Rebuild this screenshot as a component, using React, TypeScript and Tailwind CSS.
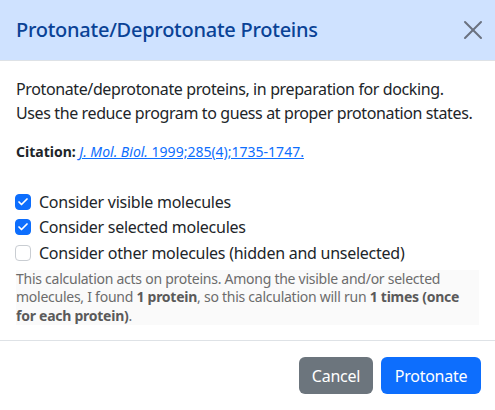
import { Check, X } from 'lucide-react'

const FONT = 'font-["Noto_Sans","Open_Sans",sans-serif] tracking-[-0.016em]'

const OPTIONS = [
  { label: 'Consider visible molecules', checked: true },
  { label: 'Consider selected molecules', checked: true },
  { label: 'Consider other molecules (hidden and unselected)', checked: false },
]

function CheckRow({ label, checked }: { label: string; checked: boolean }) {
  return (
    <div className="flex h-[25.5px] items-center gap-2">
      <span
        className={`ml-[-1px] flex h-4 w-4 shrink-0 items-center justify-center rounded-[4px] border ${
          checked ? 'border-[#0d6efd] bg-[#0d6efd]' : 'border-[#c9cdd2] bg-white'
        }`}
      >
        {checked && <Check className="h-3 w-3 text-white" strokeWidth={3.5} />}
      </span>
      <span className="text-[16px] leading-6 text-[#212529]">{label}</span>
    </div>
  )
}

export default function App() {
  return (
    <div className={`h-[410px] w-[495px] overflow-hidden bg-white ${FONT}`}>
      {/* header */}
      <div className="flex h-[61px] items-center justify-between border-b border-[#dee2e6] bg-[#cfe2ff] pl-4 pr-[6px]">
        <h5 className="text-[20px] font-medium leading-6 text-[#0a4296]">Protonate/Deprotonate Proteins</h5>
        <X className="h-8 w-8 text-[#6b7280]" strokeWidth={1.5} />
      </div>

      {/* body */}
      <div className="px-4 pb-[15px] pt-4">
        <p className="whitespace-nowrap text-[16px] leading-6 tracking-[-0.024em] text-[#212529]">
          Protonate/deprotonate proteins, in preparation for docking.
          <br />
          Uses the reduce program to guess at proper protonation states.
        </p>
        <p className="mt-4 text-[14px] leading-[21px] tracking-normal text-[#212529]">
          <b className="font-bold">Citation:</b>{' '}
          <a className="text-[#0d6efd] underline">
            <i>J. Mol. Biol.</i> 1999;285(4);1735-1747.
          </a>
        </p>

        <div className="mt-[27px]">
          {OPTIONS.map(o => (
            <CheckRow key={o.label} label={o.label} checked={o.checked} />
          ))}
        </div>

        <div className="mt-[4px] bg-[#fafafa] pr-3 text-[14px] leading-[18.5px] text-[#6c6c6c]">
          This calculation acts on proteins. Among the visible and/or selected molecules, I found{' '}
          <b className="font-bold text-[#5a5a5a]">1 protein</b>, so this calculation will run{' '}
          <b className="font-bold text-[#5a5a5a]">1 times (once for each protein)</b>.
        </div>
      </div>

      {/* footer */}
      <div className="flex justify-end gap-2 border-t border-[#dee2e6] pr-[14px] pt-4">
        <button className="h-[37px] w-[74px] rounded-md bg-[#6c757d] text-[16px] text-white">Cancel</button>
        <button className="h-[37px] w-[100px] rounded-md bg-[#0d6efd] text-[16px] text-white">Protonate</button>
      </div>
    </div>
  )
}
